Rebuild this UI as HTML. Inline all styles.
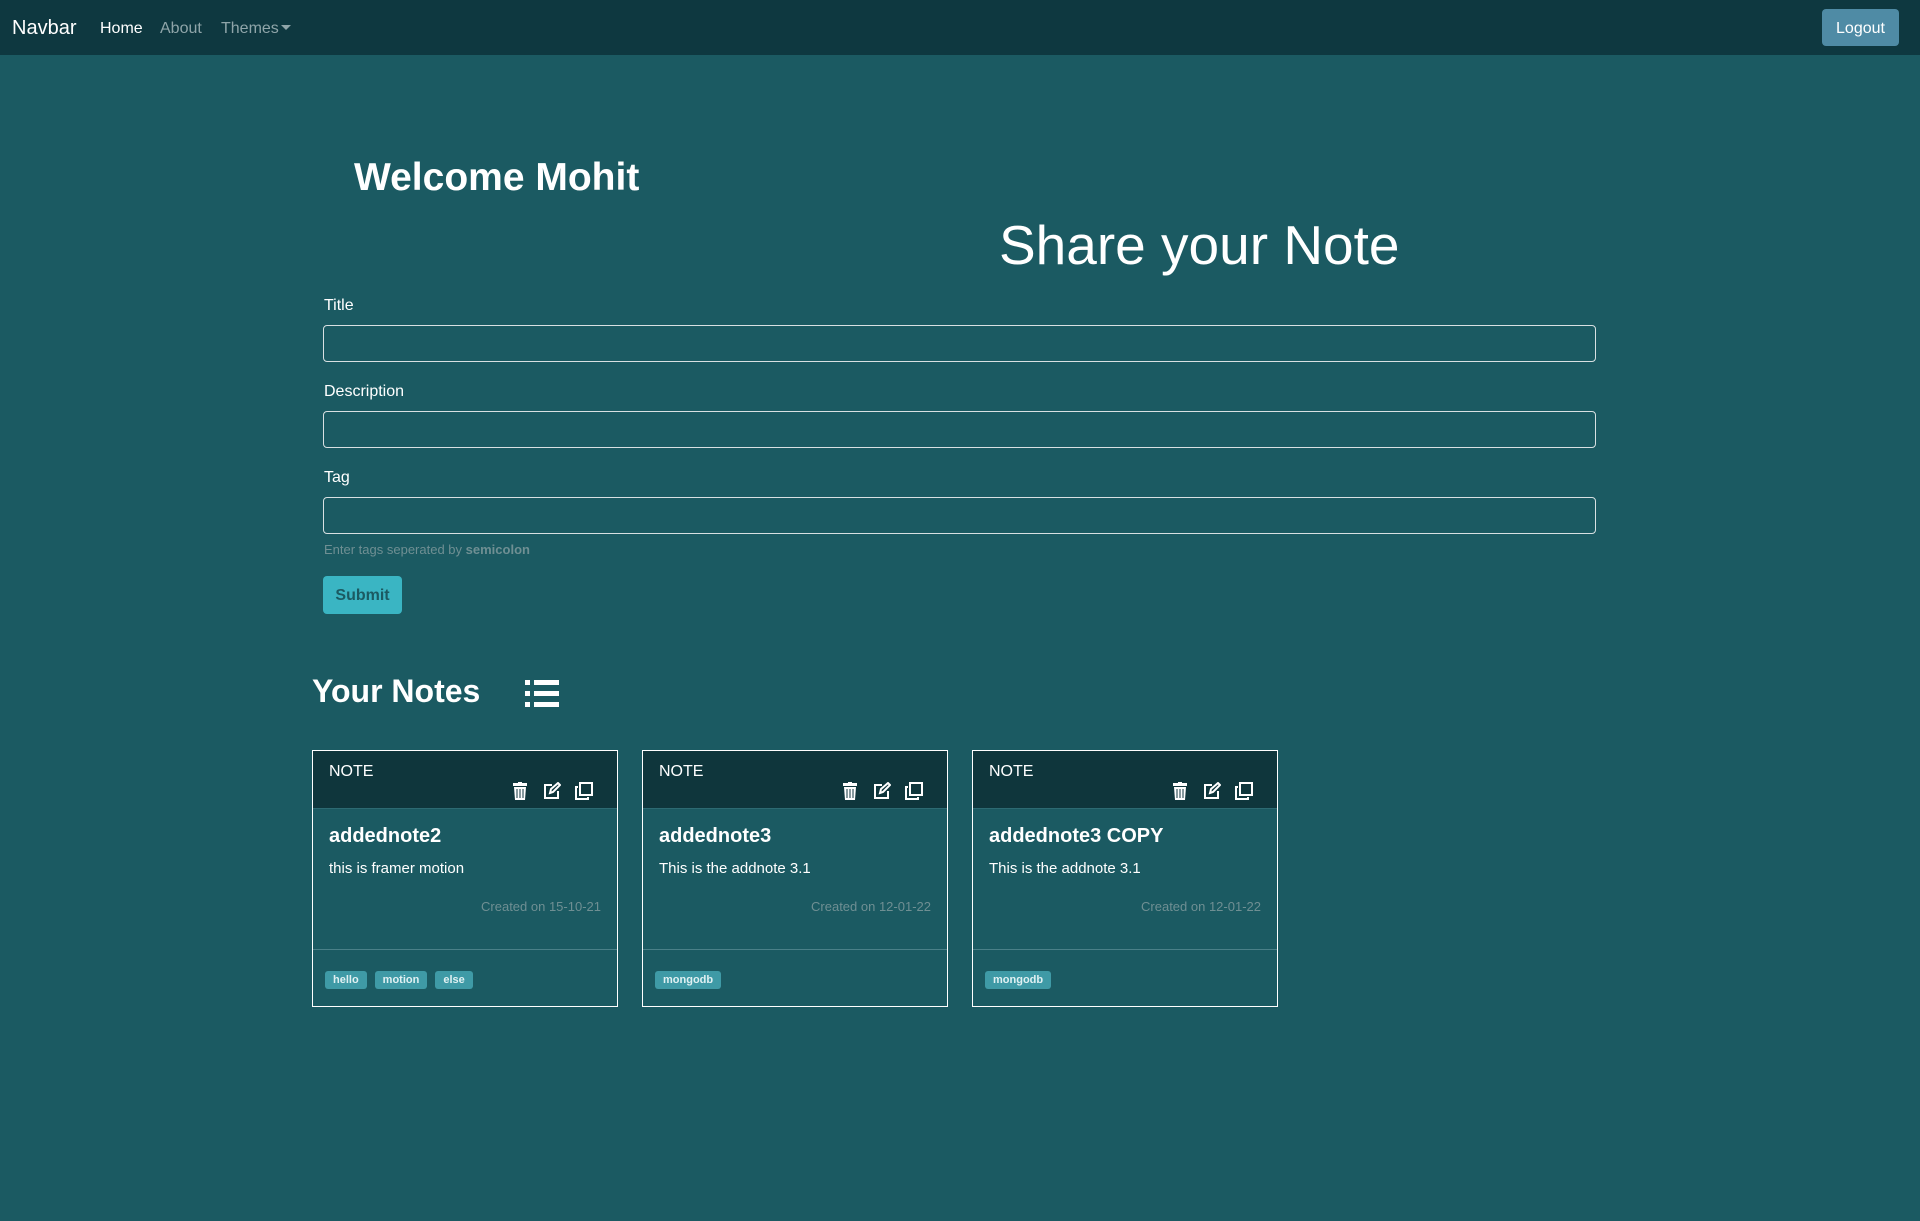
<!DOCTYPE html>
<html><head><meta charset="utf-8"><style>
*{box-sizing:border-box;margin:0;padding:0}
body{width:1920px;height:1221px;background:#1b5a62;font-family:"Liberation Sans",sans-serif;color:#fff;position:relative;overflow:hidden}
.nav{position:absolute;left:0;top:0;width:1920px;height:55px;background:#0e3840}
.abs{position:absolute;white-space:nowrap}
.lbl{font-size:16px;color:#fff}
.inp{position:absolute;left:323px;width:1273px;height:37px;border:1px solid #d8e0e2;border-radius:4px}
.card{position:absolute;top:750px;width:306px;height:257px;border:1px solid #fff}
.hd{height:58px;background:#0f363c;border-bottom:1px solid #2d6a72;position:relative}
.card .t{position:absolute;left:16px;top:12px;font-size:16px}
.ic{position:absolute;top:31px}
.nt{position:absolute;left:16px;top:74px;font-size:20px;font-weight:bold}
.ds{position:absolute;left:16px;top:109px;font-size:15px}
.cr{position:absolute;right:16px;top:148px;font-size:13px;color:#6f8f93}
.dv{position:absolute;left:0;right:0;top:198px;border-top:1px solid #4a8088}
.bd{position:absolute;top:220px;display:flex;gap:8px;left:12px}
.bd span{background:#3f9aa6;font-size:11px;font-weight:bold;padding:3px 8px;border-radius:3px;color:#e0f0f2}
</style></head><body>
<div class="nav">
<div class="abs" style="left:12px;top:17px;font-size:20px">Navbar</div>
<div class="abs" style="left:100px;top:20px;font-size:16px">Home</div>
<div class="abs" style="left:160px;top:20px;font-size:16px;color:#8fa5a9">About</div>
<div class="abs" style="left:221px;top:20px;font-size:16px;color:#8fa5a9">Themes <span style="display:inline-block;border-left:5px solid transparent;border-right:5px solid transparent;border-top:5px solid #8fa5a9;vertical-align:3px;margin-left:-2px"></span></div>
<div class="abs" style="left:1822px;top:9px;width:77px;height:37px;background:#4f8ba5;border-radius:4px;font-size:16px;text-align:center;line-height:39px">Logout</div>
</div>
<div class="abs" style="left:354px;top:156px;font-size:39px;font-weight:bold">Welcome Mohit</div>
<div class="abs" style="left:999px;top:213px;font-size:55px;font-weight:300">Share your Note</div>
<div class="abs lbl" style="left:324px;top:297px">Title</div>
<div class="inp" style="top:325px"></div>
<div class="abs lbl" style="left:324px;top:383px">Description</div>
<div class="inp" style="top:411px"></div>
<div class="abs lbl" style="left:324px;top:469px">Tag</div>
<div class="inp" style="top:497px"></div>
<div class="abs" style="left:324px;top:542px;font-size:13px;color:#6f8f93">Enter tags seperated by <b>semicolon</b></div>
<div class="abs" style="left:323px;top:576px;width:79px;height:38px;background:#3ab5c3;border-radius:4px;color:#1b5a62;font-size:16px;font-weight:bold;text-align:center;line-height:40px">Submit</div>
<div class="abs" style="left:312px;top:673px;font-size:32px;font-weight:bold">Your Notes</div>
<svg class="abs" style="left:525px;top:680px" width="34" height="28" viewBox="0 0 34 28" fill="#fff"><rect x="0" y="0" width="5" height="5"/><rect x="0" y="11" width="5" height="5"/><rect x="0" y="22" width="5" height="5"/><rect x="9" y="0" width="25" height="5"/><rect x="9" y="11" width="25" height="5"/><rect x="9" y="22" width="25" height="5"/></svg>

<div class="card" style="left:312px">
<div class="hd"><div class="t">NOTE</div>
<svg class="ic" style="left:199px" width="16" height="18" viewBox="0 0 16 18" fill="#fff"><rect x="1" y="1" width="14" height="3"/><rect x="6" y="0" width="4" height="2"/><path d="M2 5h12l-1 13H3z"/><path d="M5 7v9M8 7v9M11 7v9" stroke="#0f363c" stroke-width="1"/></svg>
<svg class="ic" style="left:230px" width="18" height="18" viewBox="0 0 18 18" fill="none" stroke="#fff" stroke-width="2"><path d="M9 3H2v13h13V9"/><path d="M7 11l1-4 7-6 2 2-7 7z"/></svg>
<svg class="ic" style="left:262px" width="18" height="18" viewBox="0 0 18 18" fill="none" stroke="#fff" stroke-width="2"><rect x="5" y="1" width="12" height="12"/><path d="M3 5H1v12h12v-2"/></svg>
</div>
<div class="nt">addednote2</div><div class="ds">this is framer motion</div><div class="cr">Created on 15-10-21</div><div class="dv"></div>
<div class="bd"><span>hello</span><span>motion</span><span>else</span></div>
</div>

<div class="card" style="left:642px">
<div class="hd"><div class="t">NOTE</div>
<svg class="ic" style="left:199px" width="16" height="18" viewBox="0 0 16 18" fill="#fff"><rect x="1" y="1" width="14" height="3"/><rect x="6" y="0" width="4" height="2"/><path d="M2 5h12l-1 13H3z"/><path d="M5 7v9M8 7v9M11 7v9" stroke="#0f363c" stroke-width="1"/></svg>
<svg class="ic" style="left:230px" width="18" height="18" viewBox="0 0 18 18" fill="none" stroke="#fff" stroke-width="2"><path d="M9 3H2v13h13V9"/><path d="M7 11l1-4 7-6 2 2-7 7z"/></svg>
<svg class="ic" style="left:262px" width="18" height="18" viewBox="0 0 18 18" fill="none" stroke="#fff" stroke-width="2"><rect x="5" y="1" width="12" height="12"/><path d="M3 5H1v12h12v-2"/></svg>
</div>
<div class="nt">addednote3</div><div class="ds">This is the addnote 3.1</div><div class="cr">Created on 12-01-22</div><div class="dv"></div>
<div class="bd"><span>mongodb</span></div>
</div>

<div class="card" style="left:972px">
<div class="hd"><div class="t">NOTE</div>
<svg class="ic" style="left:199px" width="16" height="18" viewBox="0 0 16 18" fill="#fff"><rect x="1" y="1" width="14" height="3"/><rect x="6" y="0" width="4" height="2"/><path d="M2 5h12l-1 13H3z"/><path d="M5 7v9M8 7v9M11 7v9" stroke="#0f363c" stroke-width="1"/></svg>
<svg class="ic" style="left:230px" width="18" height="18" viewBox="0 0 18 18" fill="none" stroke="#fff" stroke-width="2"><path d="M9 3H2v13h13V9"/><path d="M7 11l1-4 7-6 2 2-7 7z"/></svg>
<svg class="ic" style="left:262px" width="18" height="18" viewBox="0 0 18 18" fill="none" stroke="#fff" stroke-width="2"><rect x="5" y="1" width="12" height="12"/><path d="M3 5H1v12h12v-2"/></svg>
</div>
<div class="nt">addednote3 COPY</div><div class="ds">This is the addnote 3.1</div><div class="cr">Created on 12-01-22</div><div class="dv"></div>
<div class="bd"><span>mongodb</span></div>
</div>
</body></html>
